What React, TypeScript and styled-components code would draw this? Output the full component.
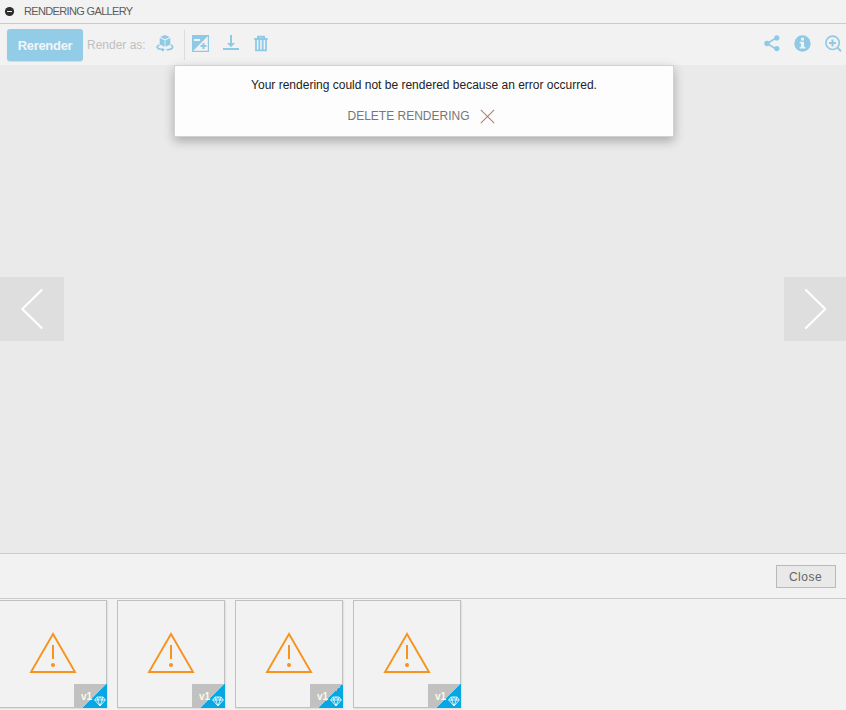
import React from "react";
import styled, { createGlobalStyle } from "styled-components";

const GlobalStyle = createGlobalStyle`
  * { box-sizing: border-box; }
  body {
    margin: 0;
    overflow: hidden;
    background: #f2f2f2;
    font-family: "Liberation Sans", Arial, sans-serif;
  }
  svg { display: block; flex: none; }
  button { font-family: inherit; margin: 0; }
`;

const Page = styled.div`
  display: flex;
  flex-direction: column;
  width: 846px;
  height: 710px;
  overflow: hidden;
  background: #f2f2f2;
`;

const TitleBar = styled.header`
  display: flex;
  align-items: center;
  gap: 9px;
  height: 24px;
  padding: 0 0 1px 4px;
  border-bottom: 1px solid #cbcbcb;
  color: #5c5c5c;
  font-size: 11px;
  line-height: 22px;
  letter-spacing: -0.65px;
`;

const Toolbar = styled.div`
  display: flex;
  align-items: center;
  height: 41px;
  padding: 0 4px 0 7px;
  color: #8ecae6;
`;

const RerenderButton = styled.button`
  width: 76px;
  height: 32px;
  padding: 1px 0 0;
  border: 0;
  border-radius: 3px;
  background: #93cce6;
  box-shadow: 0 1px 1px #dcdcdc;
  color: #f1f6f9;
  font-size: 13px;
  font-weight: bold;
  letter-spacing: -0.3px;
`;

const ToolbarLabel = styled.span`
  width: 73px;
  padding-left: 4px;
  color: #bfbfbf;
  font-size: 12px;
  white-space: nowrap;
`;

const Divider = styled.div`
  width: 1px;
  height: 30px;
  margin: 0 7px 0 10px;
  background: #dcdcdc;
`;

const IconGroup = styled.div<{ $gap?: number; $end?: boolean }>`
  display: flex;
  align-items: center;
  gap: ${(p) => p.$gap ?? 0}px;
  margin-left: ${(p) => (p.$end ? "auto" : "0")};
  padding-bottom: 2px;
`;

const Viewer = styled.main`
  position: relative;
  display: flex;
  align-items: flex-start;
  justify-content: space-between;
  height: 489px;
  padding-top: 212px;
  background: #eaeaea;
  border-bottom: 1px solid #cbcbcb;
`;

const NavButton = styled.button<{ $next?: boolean }>`
  display: flex;
  align-items: center;
  justify-content: center;
  width: 64px;
  height: 64px;
  padding: 0;
  margin: 0 ${(p) => (p.$next ? "-2px" : "0")} 0 0;
  border: 0;
  background: #dedede;
`;

const Dialog = styled.section`
  position: absolute;
  top: 0;
  left: 174px;
  display: flex;
  flex-direction: column;
  align-items: center;
  width: 500px;
  height: 72px;
  padding-top: 12px;
  border: 1px solid #d2d2d2;
  background: #fdfdfd;
  box-shadow: 0 4px 10px rgba(0, 0, 0, 0.28);
`;

const Message = styled.p`
  margin: 0;
  color: #222;
  font-size: 12px;
  line-height: 14px;
  white-space: nowrap;
`;

const DeleteAction = styled.button`
  display: flex;
  align-items: center;
  gap: 10px;
  height: 18px;
  margin: 15px 6px 0 0;
  padding: 0;
  border: 0;
  background: none;
  color: #777;
  font-size: 12px;
  line-height: 18px;
  white-space: nowrap;
`;

const ActionBar = styled.footer`
  display: flex;
  align-items: center;
  justify-content: flex-end;
  height: 45px;
  padding-right: 10px;
  border-bottom: 1px solid #cbcbcb;
`;

const CloseButton = styled.button`
  width: 60px;
  height: 23px;
  padding: 1px 1px 0 0;
  border: 1px solid #b9b9b9;
  background: #e9e9e9;
  color: #666;
  font-size: 12px;
  letter-spacing: 0.5px;
`;

const ThumbStrip = styled.div`
  display: flex;
  gap: 10px;
  padding-top: 1px;
  margin-left: -1px;
`;

const Thumb = styled.article`
  display: flex;
  flex-direction: column;
  align-items: center;
  justify-content: space-between;
  width: 108px;
  height: 108px;
  padding-top: 30px;
  border: 1px solid #c0c0c0;
  box-shadow: 1px 1px 1px #e2e2e2;
`;

const Version = styled.div`
  display: flex;
  align-items: flex-end;
  justify-content: space-between;
  align-self: flex-end;
  width: 33px;
  height: 24px;
  margin: 0 -1px -1px 0;
  padding: 0 1px 1px 7px;
  background: linear-gradient(to bottom right, transparent 50%, #06a7e2 50%) right / 24px 24px no-repeat #c1c1c1;
  color: #fff8e4;
  font-size: 10px;
  font-weight: bold;
  line-height: 21px;
`;

const CollapseIcon = () => (
  <svg width="11" height="11" viewBox="0 0 11 11">
    <circle cx="5.5" cy="5.5" r="4.6" fill="#2d2d2d" />
    <path d="M3 5.5h5" stroke="#f1f1f1" />
  </svg>
);

const ModelIcon = () => (
  <svg width="18" height="18" viewBox="0 0 18 18" fill="currentColor">
    <path d="M9 0l4.8 2L9 4.2 4.2 2zM3.7 3l4.9 2.2v6.5L3.7 9.4zM14.3 3L9.4 5.2v6.5l4.9-2.3z" />
    <path d="M3.5 10C-1 11.5 1.4 14.5 7 14.7M10.5 14.7c6 .1 8.2-3.1 4-4.7" fill="none" stroke="currentColor" strokeWidth="1.6" />
    <path d="M6 12.4l3 2.3-3 2z" />
  </svg>
);

const ExposureIcon = () => (
  <svg width="17" height="17" viewBox="0 0 17 17">
    <path fill="currentColor" d="M0 0h17v17H0z" />
    <path fill="#f2f2f2" d="M15.8 1.2v14.6H1.2z" />
    <path stroke="#f2f2f2" strokeWidth="2" d="M2 5h6" />
    <path stroke="currentColor" strokeWidth="2" d="M8.5 11h6M11.5 8v6" />
  </svg>
);

const DownloadIcon = () => (
  <svg width="16" height="17" viewBox="0 0 16 17" fill="currentColor">
    <path d="M7 0h2v8h3l-4 4.3L4 8h3zM0 13h16v2H0z" />
  </svg>
);

const TrashIcon = () => (
  <svg width="16" height="17" viewBox="-1 0 16 17" fill="none" stroke="currentColor">
    <path strokeWidth="2" d="M.3 4h13.4M4 3.5V1.8h6v1.7" />
    <path strokeWidth="1.8" d="M2 5v10.3h10V5M5.3 5v10M8.7 5v10" />
  </svg>
);

const ShareIcon = () => (
  <svg width="16" height="17" viewBox="0 0 16 17" fill="currentColor">
    <path d="M12 3L3 8.5l9 5.5" fill="none" stroke="currentColor" strokeWidth="1.5" />
    <circle cx="12.8" cy="2.9" r="2.6" />
    <circle cx="3" cy="8.5" r="2.7" />
    <circle cx="12.8" cy="13.6" r="2.6" />
  </svg>
);

const InfoIcon = () => (
  <svg width="17" height="17" viewBox="0 0 17 17">
    <circle cx="8.5" cy="8.5" r="8.2" fill="currentColor" />
    <path fill="#f2f2f2" d="M7 2.8h3v2.6H7zM5.7 6.8H10v5h1.4v1.6H5.7v-1.6H7V8.4H5.7z" />
  </svg>
);

const ZoomIcon = () => (
  <svg width="17" height="17" viewBox="0 0 17 17" fill="none" stroke="currentColor">
    <circle cx="7.6" cy="7.8" r="6.7" strokeWidth="1.6" />
    <path strokeWidth="2" d="M4 8h7M7.5 4.5v7M12.2 12.4l3.8 3.8" />
  </svg>
);

const CrossIcon = () => (
  <svg width="15" height="15" viewBox="0 0 15 15">
    <path d="M.8.8l13.4 13.4M14.2.8L.8 14.2" stroke="#b27f70" strokeWidth="1.1" />
  </svg>
);

const Chevron = ({ next }: { next?: boolean }) => (
  <svg width="24" height="42" viewBox="0 0 24 42" fill="none" stroke="#fff" strokeWidth="2.1" strokeLinecap="round" strokeLinejoin="round">
    <path d={next ? "M1.9 2L21.3 21 1.9 40" : "M21.7 2L2.3 21l19.4 19"} />
  </svg>
);

const WarningIcon = () => (
  <svg width="48" height="44" viewBox="0 0 48 44" fill="none" stroke="#f7931e">
    <path d="M24 3L2 41h44z" strokeWidth="1.9" />
    <path d="M24 14v14" strokeWidth="2" />
    <circle cx="24" cy="34" r="2" fill="#f7931e" stroke="none" />
  </svg>
);

const DiamondIcon = () => (
  <svg width="12" height="11" viewBox="0 0 12 11" fill="none" stroke="#e8fbff" strokeWidth=".9" strokeLinejoin="round">
    <path d="M3 1h6l2.3 3L6 10 .7 4zM.7 4h10.6M3 1l.8 3L6 10l2.2-6L9 1M3.8 4L6 1l2.2 3" />
  </svg>
);

const renderings = [1, 2, 3, 4];

export default function App() {
  return (
    <Page>
      <GlobalStyle />
      <TitleBar>
        <CollapseIcon />
        RENDERING GALLERY
      </TitleBar>
      <Toolbar>
        <RerenderButton>Rerender</RerenderButton>
        <ToolbarLabel>Render as:</ToolbarLabel>
        <IconGroup>
          <ModelIcon />
        </IconGroup>
        <Divider />
        <IconGroup $gap={14}>
          <ExposureIcon />
          <DownloadIcon />
          <TrashIcon />
        </IconGroup>
        <IconGroup $gap={14} $end>
          <ShareIcon />
          <InfoIcon />
          <ZoomIcon />
        </IconGroup>
      </Toolbar>
      <Viewer>
        <NavButton aria-label="Previous"><Chevron /></NavButton>
        <NavButton $next aria-label="Next"><Chevron next /></NavButton>
        <Dialog>
          <Message>Your rendering could not be rendered because an error occurred.</Message>
          <DeleteAction>DELETE RENDERING<CrossIcon /></DeleteAction>
        </Dialog>
      </Viewer>
      <ActionBar>
        <CloseButton>Close</CloseButton>
      </ActionBar>
      <ThumbStrip>
        {renderings.map((id) => (
          <Thumb key={id}>
            <WarningIcon />
            <Version>v1<DiamondIcon /></Version>
          </Thumb>
        ))}
      </ThumbStrip>
    </Page>
  );
}
